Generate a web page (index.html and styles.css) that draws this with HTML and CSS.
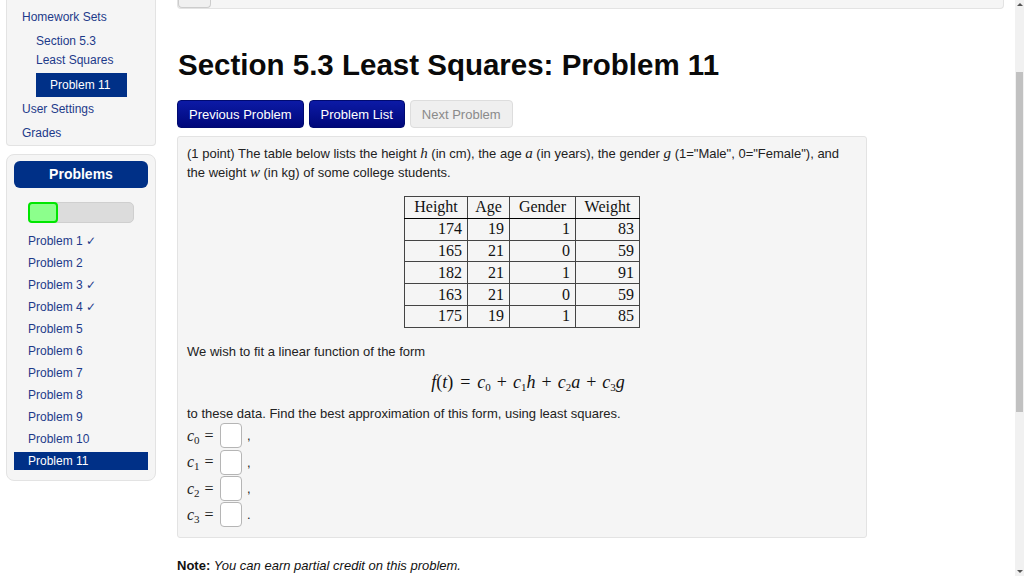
FILE: index.html
```html
<!DOCTYPE html>
<html lang="en">
<head>
<meta charset="utf-8">
<title>Section 5.3 Least Squares: Problem 11</title>
<link rel="stylesheet" href="styles.css">
</head>
<body>
<div class="layout">
  <aside class="sidebar">
    <nav class="panel menu">
      <ul class="menu-list">
        <li><a class="menu-link" href="#">Homework Sets</a>
          <ul class="sub-list">
            <li><a class="menu-link" href="#">Section 5.3 Least Squares</a></li>
            <li><a class="menu-link active" href="#">Problem 11</a></li>
          </ul>
        </li>
        <li><a class="menu-link" href="#">User Settings</a></li>
        <li><a class="menu-link" href="#">Grades</a></li>
      </ul>
    </nav>
    <nav class="panel problems">
      <div class="problems-head">Problems</div>
      <div class="progress"><div class="progress-done"></div></div>
      <ul class="problem-list">
        <li><a class="prob-link" href="#">Problem 1 <span class="check">✓</span></a></li>
        <li><a class="prob-link" href="#">Problem 2</a></li>
        <li><a class="prob-link" href="#">Problem 3 <span class="check">✓</span></a></li>
        <li><a class="prob-link" href="#">Problem 4 <span class="check">✓</span></a></li>
        <li><a class="prob-link" href="#">Problem 5</a></li>
        <li><a class="prob-link" href="#">Problem 6</a></li>
        <li><a class="prob-link" href="#">Problem 7</a></li>
        <li><a class="prob-link" href="#">Problem 8</a></li>
        <li><a class="prob-link" href="#">Problem 9</a></li>
        <li><a class="prob-link" href="#">Problem 10</a></li>
        <li><a class="prob-link current" href="#">Problem 11</a></li>
      </ul>
    </nav>
  </aside>
  <main class="main">
    <div class="crumb-bar"><span class="crumb-btn"></span></div>
    <h1 class="title">Section 5.3 Least Squares: Problem 11</h1>
    <div class="nav-buttons">
      <a class="btn btn-primary" href="#">Previous Problem</a>
      <a class="btn btn-primary" href="#">Problem List</a>
      <span class="btn btn-disabled">Next Problem</span>
    </div>
    <div class="problem">
      <p class="text">(1 point) The table below lists the height <i class="mv">h</i> (in cm), the age <i class="mv">a</i> (in years), the gender <i class="mv">g</i> (1="Male", 0="Female"), and<br>the weight <i class="mv">w</i> (in kg) of some college students.</p>
      <table class="data">
        <thead>
          <tr><th class="c1">Height</th><th class="c2">Age</th><th class="c3">Gender</th><th class="c4">Weight</th></tr>
        </thead>
        <tbody>
          <tr><td>174</td><td>19</td><td>1</td><td>83</td></tr>
          <tr><td>165</td><td>21</td><td>0</td><td>59</td></tr>
          <tr><td>182</td><td>21</td><td>1</td><td>91</td></tr>
          <tr><td>163</td><td>21</td><td>0</td><td>59</td></tr>
          <tr><td>175</td><td>19</td><td>1</td><td>85</td></tr>
        </tbody>
      </table>
      <p class="text wish">We wish to fit a linear function of the form</p>
      <div class="formula"><i>f</i>(<i>t</i>)<span class="rel">=</span><i>c</i><sub>0</sub><span class="op">+</span><i>c</i><sub>1</sub><i>h</i><span class="op">+</span><i>c</i><sub>2</sub><i>a</i><span class="op">+</span><i>c</i><sub>3</sub><i>g</i></div>
      <p class="text these">to these data. Find the best approximation of this form, using least squares.</p>
      <div class="answers">
        <div class="ans-row"><span class="ans-label"><i>c</i><sub>0</sub><span class="rel">=</span></span><input class="ans-box" type="text"><span class="punct">,</span></div>
        <div class="ans-row"><span class="ans-label"><i>c</i><sub>1</sub><span class="rel">=</span></span><input class="ans-box" type="text"><span class="punct">,</span></div>
        <div class="ans-row"><span class="ans-label"><i>c</i><sub>2</sub><span class="rel">=</span></span><input class="ans-box" type="text"><span class="punct">,</span></div>
        <div class="ans-row"><span class="ans-label"><i>c</i><sub>3</sub><span class="rel">=</span></span><input class="ans-box" type="text"><span class="punct">.</span></div>
      </div>
    </div>
    <p class="note"><b>Note:</b> <i>You can earn partial credit on this problem.</i></p>
  </main>
</div>
<div class="scrollbar" aria-hidden="true">
  <span class="arrow-up"></span>
  <span class="thumb"></span>
  <span class="arrow-down"></span>
</div>
</body>
</html>
```
FILE: styles.css
```css
html { background: #fff; }
body {
  margin: 0;
  font-family: "Liberation Sans", Arial, sans-serif;
  font-size: 13px;
  color: #222;
  overflow: hidden;
}

.layout {
  display: flex;
  align-items: flex-start;
  gap: 21px;
  padding: 0 20px 0 6px;
}

.sidebar { width: 150px; flex: none; }
.panel {
  background: #f5f5f5;
  border: 1px solid #e3e3e3;
  box-sizing: border-box;
}
.menu {
  border-top: none;
  border-radius: 0 0 4px 4px;
  padding: 5px 0 0 15px;
}
.menu-list, .sub-list, .problem-list { list-style: none; margin: 0; padding: 0; }
.menu-link {
  display: block;
  font-size: 12px;
  line-height: 19px;
  padding: 2.5px 0;
  color: #1d3a8a;
  text-decoration: none;
}
.sub-list { margin-left: 14px; width: 91px; }
.sub-list li:last-child { padding-top: 1px; }
.menu-link.active {
  background: #003087;
  color: #fff;
  padding-left: 14px;
}

.problems {
  margin-top: 8px;
  border-radius: 8px;
  padding: 6px 7px 10px 7px;
}
.problems-head {
  background: #003087;
  color: #fff;
  font-weight: bold;
  font-size: 14px;
  line-height: 27px;
  text-align: center;
  border-radius: 6px;
}
.progress {
  margin: 14px 0 0 14px;
  width: 106px;
  height: 21px;
  box-sizing: border-box;
  background: #dcdcdc;
  border: 1px solid #cfcfcf;
  border-radius: 5px;
  display: flex;
}
.progress-done {
  width: 30px;
  margin: -1px 0 -1px -1px;
  box-sizing: border-box;
  background: #8cff8c;
  border: 2px solid #00e600;
  border-radius: 4px;
}
.problem-list { margin-top: 9px; }
.problem-list li { margin-bottom: 4px; }
.problem-list li:last-child { margin-bottom: 0; }
.prob-link {
  display: block;
  height: 18px;
  font-size: 12px;
  line-height: 18px;
  padding-left: 14px;
  color: #1d3a8a;
  text-decoration: none;
  white-space: nowrap;
}
.prob-link.current { background: #003087; color: #fff; }
.check { font-family: "DejaVu Sans", sans-serif; font-size: 12px; line-height: 0; }

.main { flex: 1; min-width: 0; }
.crumb-bar {
  height: 9px;
  box-sizing: border-box;
  background: #f5f5f5;
  border: 1px solid #e3e3e3;
  border-top: none;
  border-radius: 0 0 4px 4px;
  display: flex;
  align-items: flex-end;
}
.crumb-btn {
  display: block;
  width: 33px;
  height: 8px;
  box-sizing: border-box;
  background: #f0f0f0;
  border: 1px solid #cccccc;
  border-top: none;
  border-radius: 0 0 4px 4px;
}
.title {
  margin: 38.5px 0 0 1px;
  font-size: 29.5px;
  line-height: 34px;
  font-weight: bold;
  color: #0a0a0a;
}
.nav-buttons {
  margin-top: 18.5px;
  display: flex;
  gap: 5px;
  height: 28px;
}
.btn {
  display: inline-flex;
  align-items: center;
  box-sizing: border-box;
  height: 28px;
  padding: 0 11px;
  border-radius: 4px;
  font-family: "Liberation Sans", Arial, sans-serif;
  font-size: 13px;
  text-decoration: none;
  border: 1px solid transparent;
}
.btn-primary {
  background: linear-gradient(#0c1aa6, #00087a);
  border-color: #000a70;
  color: #fff;
}
.btn-disabled {
  background: #efefef;
  border-color: #dddddd;
  color: #8a8a8a;
}

.problem {
  margin-top: 8px;
  width: 690px;
  box-sizing: border-box;
  background: #f5f5f5;
  border: 1px solid #e3e3e3;
  border-radius: 3px;
  padding: 7px 9px 9px 9px;
}
.text { margin: 0; line-height: 19px; }
.mv { font-family: "Liberation Serif", serif; font-size: 15px; line-height: 1; }

.data {
  margin: 14px auto 0;
  border-collapse: collapse;
  border: 1px solid #000;
  font-family: "Liberation Serif", serif;
  font-size: 16px;
  color: #111;
}
.data th, .data td {
  border: 1px solid #444;
  padding: 0 5px;
  height: 21.8px;
  line-height: 20px;
  box-sizing: border-box;
}
.data th { font-weight: normal; text-align: center; border-bottom: 1px solid #000; }
.data td { text-align: right; }
.c1 { width: 63px; }
.c2 { width: 42px; }
.c3 { width: 66px; }
.c4 { width: 64px; }

.wish { margin-top: 14px; }
.formula {
  margin: 11px 0 0;
  text-align: center;
  font-family: "Liberation Serif", serif;
  font-size: 18px;
  line-height: 20px;
  color: #111;
  padding-left: 12px;
}
.formula sub, .ans-label sub { font-size: 11px; font-style: normal; vertical-align: -3px; line-height: 0; }
.formula .rel { margin: 0 7px; }
.formula .op { margin: 0 6px; }
.these { margin-top: 12px; }

.answers { margin-top: 0; }
.ans-row {
  display: flex;
  align-items: center;
  height: 26.33px;
}
.ans-label {
  font-family: "Liberation Serif", serif;
  font-size: 16px;
  color: #222;
  width: 33px;
  white-space: nowrap;
}
.ans-label .rel { margin-left: 5px; }
.ans-box {
  width: 22px;
  height: 25px;
  box-sizing: border-box;
  margin: 0;
  padding: 0;
  background: #fff;
  border: 1px solid #b5b5b5;
  border-radius: 4px;
}
.punct { margin-left: 5px; font-size: 13px; }

.note { margin: 18px 0 0; line-height: 19px; color: #111; }

.scrollbar {
  position: fixed;
  top: 0;
  right: 0;
  width: 9px;
  height: 100%;
  background: #f1f1f1;
}
.thumb {
  position: absolute;
  left: 1px;
  top: 72px;
  width: 7px;
  height: 340px;
  background: #c1c1c1;
}
.arrow-up, .arrow-down {
  position: absolute;
  left: 2px;
  width: 0;
  height: 0;
  border-left: 3px solid transparent;
  border-right: 3px solid transparent;
}
.arrow-up { top: 3px; border-bottom: 3px solid #555; }
.arrow-down { bottom: 3px; border-top: 3px solid #555; }
```
